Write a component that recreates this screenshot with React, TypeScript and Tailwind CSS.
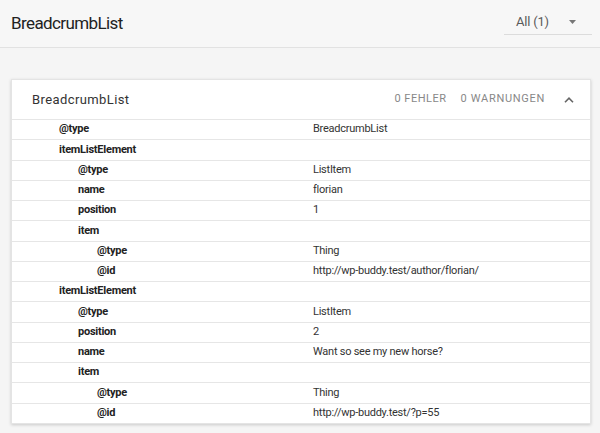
import React from "react";

type Row = { k: string; v: string; l: number };

const rows: Row[] = [
  { k: "@type", v: "BreadcrumbList", l: 0 },
  { k: "itemListElement", v: "", l: 0 },
  { k: "@type", v: "ListItem", l: 1 },
  { k: "name", v: "florian", l: 1 },
  { k: "position", v: "1", l: 1 },
  { k: "item", v: "", l: 1 },
  { k: "@type", v: "Thing", l: 2 },
  { k: "@id", v: "http://wp-buddy.test/author/florian/", l: 2 },
  { k: "itemListElement", v: "", l: 0 },
  { k: "@type", v: "ListItem", l: 1 },
  { k: "position", v: "2", l: 1 },
  { k: "name", v: "Want so see my new horse?", l: 1 },
  { k: "item", v: "", l: 1 },
  { k: "@type", v: "Thing", l: 2 },
  { k: "@id", v: "http://wp-buddy.test/?p=55", l: 2 },
];

const pad = ["pl-[47px]", "pl-[66px]", "pl-[85px]"];

export default function App() {
  return (
    <div
      className="w-[600px] h-[433px] bg-[#f5f5f5] overflow-hidden"
      style={{ fontFamily: "Roboto, 'Liberation Sans', sans-serif" }}
    >
      <div className="h-[48px] border-b border-[#e2e2e2] bg-[#f7f7f7] flex items-center justify-between pl-[11px] pr-[8px]">
        <div className="text-[17px] tracking-[-0.6px] text-[#222] leading-none">BreadcrumbList</div>
        <div className="w-[88px] h-[26px] mt-[-3px] border-b border-[#dcdcdc] flex items-center pl-[12px] pr-[16px] justify-between">
          <span className="text-[13px] tracking-[-0.2px] text-[#5a5a5a]">All (1)</span>
          <svg width="7" height="4" viewBox="0 0 7 4">
            <path d="M0 0 L7 0 L3.5 4 Z" fill="#777" />
          </svg>
        </div>
      </div>
      <div className="pt-[31px] pl-[11px]">
        <div className="w-[580px] bg-white border border-[#e4e4e4] shadow-[0_1px_3px_rgba(0,0,0,0.18)]">
          <div className="h-[39px] flex items-center pl-[20px] pr-[16px]">
            <span className="text-[13px] tracking-[0.4px] text-[#333]">BreadcrumbList</span>
            <span className="ml-auto text-[11px] tracking-[0.5px] text-[#888]">0 FEHLER</span>
            <span className="ml-[14px] text-[11px] tracking-[0.7px] text-[#888]">0 WARNUNGEN</span>
            <svg className="ml-[19px]" width="10" height="6" viewBox="0 0 10 6">
              <path d="M1 5.2 L5 1.2 L9 5.2" fill="none" stroke="#666" strokeWidth="1.6" />
            </svg>
          </div>
          {rows.map((r, i) => (
            <div key={i} className="h-[20.25px] border-t border-[#e6e6e6] flex items-center text-[11px] tracking-[-0.25px]">
              <div className={`w-[301px] font-bold text-[#222] ${pad[r.l]}`}>{r.k}</div>
              <div className="text-[#333]">{r.v}</div>
            </div>
          ))}
        </div>
      </div>
    </div>
  );
}
